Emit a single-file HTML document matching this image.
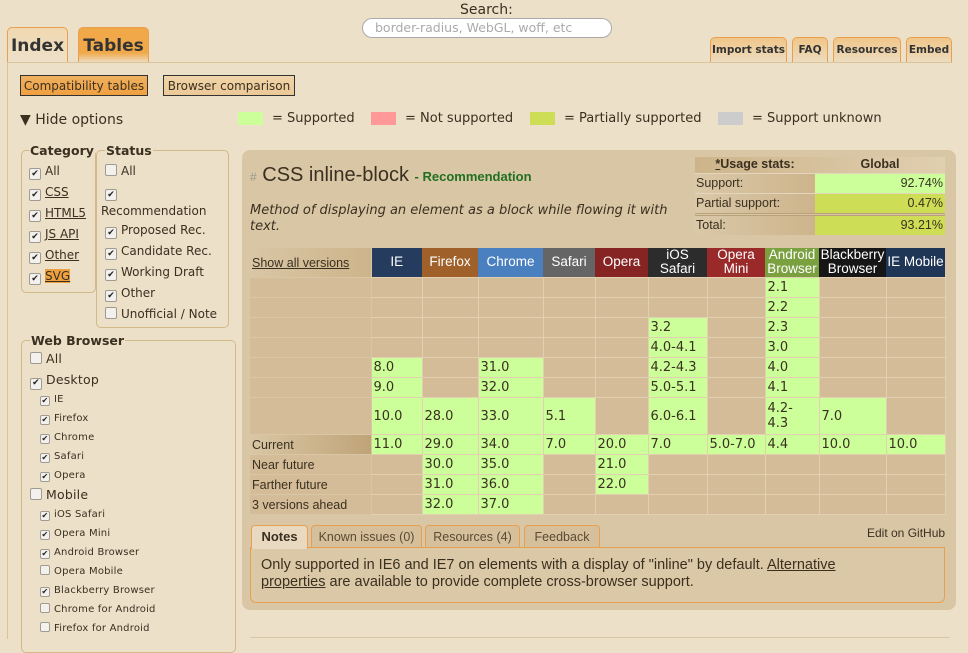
<!DOCTYPE html>
<html><head><meta charset="utf-8"><style>
*{box-sizing:border-box;margin:0;padding:0}
body{width:968px;height:639px;overflow:hidden;background:#ede0c9;font-family:"DejaVu Sans","Liberation Sans",sans-serif;color:#3a3020;position:relative;font-size:13px}
.a{position:absolute}
.cb{display:inline-block;width:12px;height:12px;border:1px solid #a09a90;border-radius:2px;background:#f3f1ee;vertical-align:-1px;margin-right:4px;font-size:9px;line-height:10px;text-align:center;color:#222}
.sm .cb{width:10px;height:10px;font-size:8px;line-height:8px}
.tab{position:absolute;border:1px solid #e8a050;border-bottom:none;border-radius:5px 5px 0 0;background:linear-gradient(#f0c688,#ecdcc0);font-weight:bold;font-size:10.5px;text-align:center;color:#333;white-space:nowrap;overflow:hidden}
.btn{position:absolute;border:1px solid #333;font-size:12px;text-align:center;line-height:20px;white-space:nowrap}
fieldset{position:absolute;border:1px solid #d3b888;border-radius:5px}
legend{font-weight:bold;font-size:12.5px;padding:0 1px}
.li{height:21px;line-height:21px;font-size:12px;white-space:nowrap}
.sm .li{height:19px;line-height:19px;font-size:10px;letter-spacing:.2px}
u{text-decoration:underline}
table{position:absolute;left:250px;top:247px;border-collapse:collapse;font-size:13px}
td{border:1px solid #e2d0b0;background:#d4bc98;padding:0 0 0 2px;height:20px;vertical-align:middle;white-space:nowrap}
td.g{background:#ccff99}
th{color:#fff;font-weight:normal;font-family:"Liberation Sans",sans-serif;font-size:13.5px;line-height:14px;height:30px;padding:0}
td.l{background:#d4bc98;font-family:"Liberation Sans",sans-serif;font-size:12.5px;border-color:#d9c6a4;border-left:none}
</style></head><body>
<div class="a" style="left:460px;top:2px;font-size:14px">Search:</div>
<div class="a" style="left:362px;top:18px;width:250px;height:20px;border:1px solid #aaa;border-radius:10px;background:#fff;color:#aaa;font-size:12.5px;line-height:18px;padding-left:12px;white-space:nowrap">border-radius, WebGL, woff, etc</div>

<div class="tab" style="left:7px;top:27px;width:61px;height:36px;font-size:17px;line-height:36px;background:linear-gradient(#f0d8b0,#ede0c9)">Index</div>
<div class="tab" style="left:78px;top:27px;width:71px;height:36px;font-size:17px;line-height:36px;background:linear-gradient(#f0a848 70%,#ede0c9)">Tables</div>
<div class="tab" style="left:710px;top:37px;width:77px;height:25px;line-height:24px">Import stats</div>
<div class="tab" style="left:792px;top:37px;width:36px;height:25px;line-height:24px">FAQ</div>
<div class="tab" style="left:833px;top:37px;width:68px;height:25px;line-height:24px">Resources</div>
<div class="tab" style="left:906px;top:37px;width:46px;height:25px;line-height:24px">Embed</div>
<div class="a" style="left:7px;top:62px;width:945px;border-top:1px solid #dcc49a"></div>
<div class="a" style="left:7px;top:62px;height:577px;border-left:1px solid #dcc49a"></div>

<div class="btn" style="left:20px;top:75px;width:128px;height:21px;background:linear-gradient(#eeb060,#f0a040)">Compatibility tables</div>
<div class="btn" style="left:163px;top:75px;width:132px;height:21px;background:linear-gradient(#efd5a8,#ecc898)">Browser comparison</div>

<div class="a" style="left:20px;top:112px;font-size:14px">▼ Hide options</div>
<div class="a" style="left:238px;top:112px;width:25px;height:13px;background:#ccff99"></div>
<div class="a" style="left:272px;top:111px;font-size:13px">= Supported</div>
<div class="a" style="left:371px;top:112px;width:25px;height:13px;background:#ff9999"></div>
<div class="a" style="left:405px;top:111px;font-size:13px">= Not supported</div>
<div class="a" style="left:530px;top:112px;width:25px;height:13px;background:#cddd55"></div>
<div class="a" style="left:564px;top:111px;font-size:13px">= Partially supported</div>
<div class="a" style="left:718px;top:112px;width:25px;height:13px;background:#cccccc"></div>
<div class="a" style="left:752px;top:111px;font-size:13px">= Support unknown</div>

<fieldset style="left:21px;top:143px;width:72px;height:150px;padding:3px 0 0 7px"><legend>Category</legend>
<div class="li"><span class="cb">✔</span>All</div>
<div class="li"><span class="cb">✔</span><u>CSS</u></div>
<div class="li"><span class="cb">✔</span><u>HTML5</u></div>
<div class="li"><span class="cb">✔</span><u>JS API</u></div>
<div class="li"><span class="cb">✔</span><u>Other</u></div>
<div class="li"><span class="cb">✔</span><u style="background:#eca040">SVG</u></div>
</fieldset>
<fieldset style="left:96px;top:143px;width:133px;height:185px;padding:3px 0 0 8px"><legend>Status</legend>
<div class="li"><span class="cb"></span>All</div>
<div class="li"><span class="cb">✔</span></div>
<div class="li" style="margin-left:-4px;height:17px;line-height:17px">Recommendation</div>
<div class="li"><span class="cb">✔</span>Proposed Rec.</div>
<div class="li"><span class="cb">✔</span>Candidate Rec.</div>
<div class="li"><span class="cb">✔</span>Working Draft</div>
<div class="li"><span class="cb">✔</span>Other</div>
<div class="li"><span class="cb"></span>Unofficial / Note</div>
</fieldset>
<fieldset class="sm" style="left:21px;top:333px;width:215px;height:320px;padding:1px 0 0 8px"><legend>Web Browser</legend>
<div class="li" style="font-size:12.5px;height:20px;line-height:20px"><span class="cb" style="width:12px;height:12px"></span>All</div>
<div class="li" style="font-size:12.5px;height:21px;line-height:21px"><span class="cb" style="width:12px;height:12px;font-size:9px">✔</span>Desktop</div>
<div style="padding-left:10px">
<div class="li"><span class="cb">✔</span>IE</div>
<div class="li"><span class="cb">✔</span>Firefox</div>
<div class="li"><span class="cb">✔</span>Chrome</div>
<div class="li"><span class="cb">✔</span>Safari</div>
<div class="li"><span class="cb">✔</span>Opera</div></div>
<div class="li" style="font-size:12.5px;height:20px;line-height:20px"><span class="cb" style="width:12px;height:12px"></span>Mobile</div>
<div style="padding-left:10px">
<div class="li"><span class="cb">✔</span>iOS Safari</div>
<div class="li"><span class="cb">✔</span>Opera Mini</div>
<div class="li"><span class="cb">✔</span>Android Browser</div>
<div class="li"><span class="cb"></span>Opera Mobile</div>
<div class="li"><span class="cb">✔</span>Blackberry Browser</div>
<div class="li"><span class="cb"></span>Chrome for Android</div>
<div class="li"><span class="cb"></span>Firefox for Android</div></div>
</fieldset>

<div class="a" style="left:242px;top:150px;width:714px;height:460px;background:#d9c6a5;border-radius:8px"></div>
<div class="a" style="left:250px;top:164px;font-family:'Liberation Sans',sans-serif;font-size:20px;color:#3a3020;white-space:nowrap"><span style="font-size:12px;color:#998">#</span> CSS inline-block <span style="font-size:13px;font-weight:bold;color:#217021">- Recommendation</span></div>
<div class="a" style="left:250px;top:203px;width:440px;font-style:italic;font-size:13px;line-height:16px">Method of displaying an element as a block while flowing it with text.</div>

<div class="a" style="left:695px;top:157px;width:250px;font-family:'Liberation Sans',sans-serif;font-size:12.5px">
<div style="height:16px;background:linear-gradient(90deg,#cdb48a,#e0cfb0);font-weight:bold;display:flex"><span style="width:120px;text-align:center"><u>*</u>Usage stats:</span><span style="flex:1;text-align:center">Global</span></div>
<div style="height:20px;display:flex;border-top:1px solid #e4d6bc;line-height:19px"><span style="width:120px;padding-left:1px;background:linear-gradient(90deg,#dac8a8,#cdb48c)">Support:</span><span style="flex:1;background:#ccff99;text-align:right;padding-right:2px">92.74%</span></div>
<div style="height:20px;display:flex;border-top:1px solid #e4d6bc;line-height:19px"><span style="width:120px;padding-left:1px;background:linear-gradient(90deg,#dac8a8,#cdb48c)">Partial support:</span><span style="flex:1;background:#cddd55;text-align:right;padding-right:2px">0.47%</span></div>
<div style="height:22px;display:flex;border-top:3px double #b8a078;line-height:19px"><span style="width:120px;padding-left:1px;background:linear-gradient(90deg,#dac8a8,#cdb48c)">Total:</span><span style="flex:1;background:#cddd55;text-align:right;padding-right:2px">93.21%</span></div>
</div>

<table>
<tr><td class="l" style="width:121px;height:30px;background:linear-gradient(90deg,#d9c6a5,#cdb48a)"><u style="font-size:12.5px">Show all versions</u></td>
<th style="width:51px;background:#253c5e">IE</th>
<th style="width:56px;background:#a0602a">Firefox</th>
<th style="width:65px;background:#4a80c0">Chrome</th>
<th style="width:52px;background:#656565">Safari</th>
<th style="width:53px;background:#862424">Opera</th>
<th style="width:59px;background:#2c2c2c">iOS<br>Safari</th>
<th style="width:58px;background:#9a2a2a">Opera<br>Mini</th>
<th style="width:54px;background:#7aa040">Android<br>Browser</th>
<th style="width:67px;background:#161616">Blackberry<br>Browser</th>
<th style="width:59px;background:#203656">IE Mobile</th></tr>
<tr><td class="l"></td><td></td><td></td><td></td><td></td><td></td><td></td><td></td><td class="g">2.1</td><td></td><td></td></tr>
<tr><td class="l"></td><td></td><td></td><td></td><td></td><td></td><td></td><td></td><td class="g">2.2</td><td></td><td></td></tr>
<tr><td class="l"></td><td></td><td></td><td></td><td></td><td></td><td class="g">3.2</td><td></td><td class="g">2.3</td><td></td><td></td></tr>
<tr><td class="l"></td><td></td><td></td><td></td><td></td><td></td><td class="g">4.0-4.1</td><td></td><td class="g">3.0</td><td></td><td></td></tr>
<tr><td class="l"></td><td class="g">8.0</td><td></td><td class="g">31.0</td><td></td><td></td><td class="g">4.2-4.3</td><td></td><td class="g">4.0</td><td></td><td></td></tr>
<tr><td class="l"></td><td class="g">9.0</td><td></td><td class="g">32.0</td><td></td><td></td><td class="g">5.0-5.1</td><td></td><td class="g">4.1</td><td></td><td></td></tr>
<tr><td class="l" style="height:37px"></td><td class="g">10.0</td><td class="g">28.0</td><td class="g">33.0</td><td class="g">5.1</td><td></td><td class="g">6.0-6.1</td><td></td><td class="g" style="line-height:15px">4.2-<br>4.3</td><td class="g">7.0</td><td></td></tr>
<tr><td class="l" style="background:linear-gradient(90deg,#d9c6a5,#c0a478)">Current</td><td class="g">11.0</td><td class="g">29.0</td><td class="g">34.0</td><td class="g">7.0</td><td class="g">20.0</td><td class="g">7.0</td><td class="g">5.0-7.0</td><td class="g">4.4</td><td class="g">10.0</td><td class="g">10.0</td></tr>
<tr><td class="l">Near future</td><td></td><td class="g">30.0</td><td class="g">35.0</td><td></td><td class="g">21.0</td><td></td><td></td><td></td><td></td><td></td></tr>
<tr><td class="l">Farther future</td><td></td><td class="g">31.0</td><td class="g">36.0</td><td></td><td class="g">22.0</td><td></td><td></td><td></td><td></td><td></td></tr>
<tr><td class="l">3 versions ahead</td><td></td><td class="g">32.0</td><td class="g">37.0</td><td></td><td></td><td></td><td></td><td></td><td></td><td></td></tr>
</table>

<div class="a" style="left:251px;top:525px;width:57px;height:24px;border:1px solid #e8a050;border-bottom:none;border-radius:4px 4px 0 0;background:#e8d9c0;font-weight:bold;font-family:'Liberation Sans',sans-serif;font-size:13px;text-align:center;line-height:22px;z-index:2">Notes</div>
<div class="a" style="left:311px;top:525px;width:111px;height:22px;border:1px solid #e8a050;border-bottom:none;border-radius:4px 4px 0 0;background:#d6c09c;font-family:'Liberation Sans',sans-serif;font-size:12.5px;color:#5a4a35;text-align:center;line-height:22px">Known issues (0)</div>
<div class="a" style="left:425px;top:525px;width:95px;height:22px;border:1px solid #e8a050;border-bottom:none;border-radius:4px 4px 0 0;background:#d6c09c;font-family:'Liberation Sans',sans-serif;font-size:12.5px;color:#5a4a35;text-align:center;line-height:22px">Resources (4)</div>
<div class="a" style="left:524px;top:525px;width:76px;height:22px;border:1px solid #e8a050;border-bottom:none;border-radius:4px 4px 0 0;background:#d6c09c;font-family:'Liberation Sans',sans-serif;font-size:12.5px;color:#5a4a35;text-align:center;line-height:22px">Feedback</div>
<div class="a" style="left:867px;top:526px;font-family:'Liberation Sans',sans-serif;font-size:12px">Edit on GitHub</div>
<div class="a" style="left:250px;top:547px;width:695px;height:56px;border:1px solid #e8a050;border-radius:0 0 6px 6px;padding:9px 10px;font-size:14.5px;line-height:17px;font-family:'Liberation Sans',sans-serif;background:#dbc8a6;white-space:nowrap">Only supported in IE6 and IE7 on elements with a display of "inline" by default. <u>Alternative</u><br><u>properties</u> are available to provide complete cross-browser support.</div>
<div class="a" style="left:250px;top:637px;width:700px;border-top:1px solid #d9c6a5"></div>
</body></html>
